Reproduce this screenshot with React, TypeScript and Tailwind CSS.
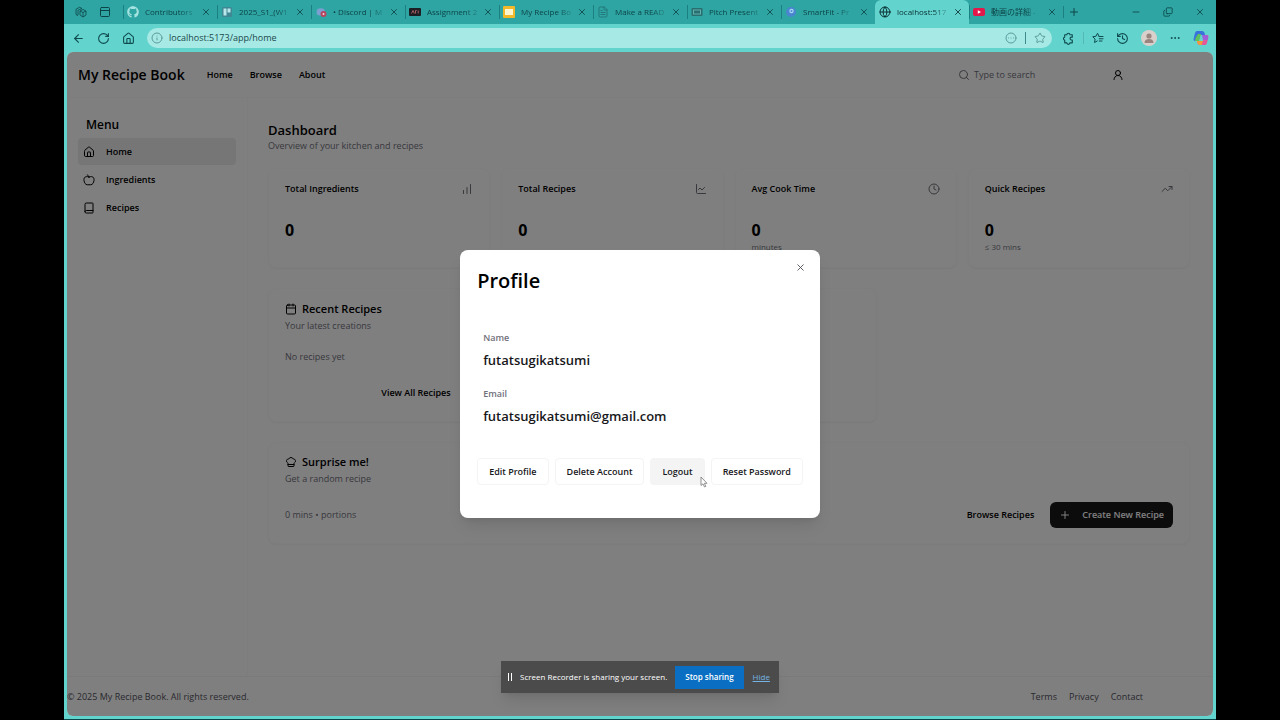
import type { ReactNode } from "react";
import {
  ArrowLeft,
  Book,
  Calendar,
  ChartLine,
  ChartNoAxesColumnIncreasing,
  ChefHat,
  CircleEllipsis,
  Clock,
  Copy,
  Ellipsis,
  FileText,
  Globe,
  History,
  House,
  Info,
  Minus,
  PanelTop,
  Plus,
  RotateCw,
  Search,
  Star,
  TrendingUp,
  UserRound,
  X,
} from "lucide-react";
import { FaGithub } from "react-icons/fa";

const SlidesIcon = () => (
  <svg className="size-3" viewBox="0 0 12 12">
    <rect width="12" height="12" rx="1" fill="#f2b92b" />
    <rect x="2" y="3" width="8" height="6" fill="#fff6cf" />
  </svg>
);

const TrelloIcon = () => (
  <svg className="size-3" viewBox="0 0 12 12">
    <rect x="1" y="1" width="10" height="10" rx="1.5" fill="#3f8793" />
    <rect x="2.5" y="2.5" width="3" height="7" fill="#b9e6ea" />
    <rect x="6.5" y="2.5" width="3" height="4" fill="#b9e6ea" />
  </svg>
);

const DiscordIcon = () => (
  <svg className="size-3" viewBox="0 0 12 12">
    <path d="M2 3.5Q5 1.5 9 3L10.5 8 8 9.5H4L1.5 8Z" fill="#7b9fd0" />
    <circle cx="8.5" cy="8" r="3" fill="#b8455f" />
    <circle cx="8.5" cy="8" r="1" fill="#f3d5dc" />
  </svg>
);

const BadgeIcon = () => (
  <svg className="size-3" viewBox="0 0 12 12">
    <rect y="2" width="12" height="8" rx="1" fill="#1b1f24" />
    <path d="M2.5 7.5 4 4.5 5.3 7.5M6.5 7.5v-3h1.2M9.2 4.5v3" stroke="#c87070" strokeWidth="0.8" fill="none" />
  </svg>
);

const PitchIcon = () => (
  <svg className="size-3" viewBox="0 0 12 12">
    <rect x="0.5" y="2" width="11" height="8" rx="1" fill="#2b6e70" />
    <rect x="2.5" y="4" width="7" height="4" fill="none" stroke="#5fb0ae" />
  </svg>
);

const SmartFitIcon = () => (
  <svg className="size-3" viewBox="0 0 12 12">
    <circle cx="6" cy="6" r="5" fill="#4a86cf" />
    <circle cx="6.5" cy="5" r="2.2" fill="#a8d8f5" />
    <circle cx="6.5" cy="5" r="1" fill="#4a86cf" />
  </svg>
);

const VideoIcon = () => (
  <svg className="size-3" viewBox="0 0 12 12">
    <rect y="2" width="12" height="8" rx="2" fill="#e3174a" />
    <path d="M4.8 4.2v3.6L8 6Z" fill="#fff" />
  </svg>
);

const WorkspacesIcon = () => (
  <svg className="size-3" viewBox="0 0 24 24" fill="none" stroke="currentColor" strokeWidth="1.6" strokeLinejoin="round">
    <path d="M10 10 16 7l6 3v8l-6 4-6-4Z" />
    <path d="m10 10 6 3 6-3M16 13v9" />
    <path d="M6 19.500 2 17V6.500L9 2.500l5 2.500M6 18V8.500L14 5" />
  </svg>
);

const ExtensionsIcon = () => (
  <svg className="size-[13px]" viewBox="0 0 24 24" fill="none" stroke="currentColor" strokeWidth="2" strokeLinejoin="round">
    <path d="M9 5a2.800 2.800 0 0 1 5.600 0H19v4.500h-1.500a2.700 2.700 0 0 0 0 5.400H19V20h-4.400a2.800 2.800 0 0 1-5.600 0H5v-5a2.800 2.800 0 0 1 0-5.500V5Z" />
  </svg>
);

const AppleIcon = () => (
  <svg className="size-3" viewBox="0 0 24 24" fill="none" stroke="currentColor" strokeWidth="2" strokeLinecap="round" strokeLinejoin="round">
    <path d="M12 6c-2-1-4-1-6.500-.5C2.500 6.500 1.500 9.500 2 13c.6 4.500 3 8.500 6.500 8.500h7c3.500 0 5.900-4 6.500-8.500.5-3.500-.5-6.500-3.500-7.500C16 5 14 5 12 6Z" />
    <path d="M12 6.500C12 4 10.500 2.500 8.500 2" />
  </svg>
);

const FavoritesIcon = () => (
  <svg className="size-3" viewBox="0 0 24 24" fill="none" stroke="currentColor" strokeWidth="2" strokeLinecap="round" strokeLinejoin="round">
    <path d="M14 8.500 11 2.500 8 8.500l-6.500 1 4.700 4.600L5.100 21l5.400-3M14 9h8M14.500 13.500H22M14.500 18H20" />
  </svg>
);

const CopilotIcon = () => (
  <svg className="size-4" viewBox="0 0 16 16">
    <path d="M4 1h5q2 0 2.600 2L12 5H6L4 11H2Q0 11 .8 8L2 3Q2.500 1 4 1Z" fill="#3a72dd" />
    <path d="M2 11h4l2-7H5L2.500 8Z" fill="#5fc25c" />
    <path d="M12 15H7q-2 0-2.600-2L4 11h6l2-6h2q2 0 1.200 3L14 13q-.5 2-2 2Z" fill="#e3589b" />
    <path d="M9 5h4q2.500 0 2 3l-.6 2H10Z" fill="#9e5fd8" />
    <path d="M4 11h6l-1.500 4H7q-2 0-2.600-2Z" fill="#f39a3c" />
  </svg>
);

const Cursor = () => (
  <svg className="absolute -right-1 -bottom-1 z-10 h-3 w-2" viewBox="0 0 8 12">
    <path d="M1 1v8.500l2-1.700 1.500 3.200 1.300-.6L4.400 7.300H7Z" fill="#fff" stroke="#777" strokeWidth="0.8" />
  </svg>
);

const tabs: { title: string; icon: ReactNode; active?: boolean }[] = [
  { title: "Contributors", icon: <FaGithub className="size-3 text-[#a5e3e0]" /> },
  { title: "2025_S1_(W1", icon: <TrelloIcon /> },
  { title: "• Discord | M", icon: <DiscordIcon /> },
  { title: "Assignment 2", icon: <BadgeIcon /> },
  { title: "My Recipe Bo", icon: <SlidesIcon /> },
  { title: "Make a READ", icon: <FileText className="size-3 text-[#23787a]" /> },
  { title: "Pitch Present", icon: <PitchIcon /> },
  { title: "SmartFit - Pr", icon: <SmartFitIcon /> },
  { title: "localhost:517", icon: <Globe className="size-3" />, active: true },
  { title: "動画の詳細 -", icon: <VideoIcon /> },
];

const TabStrip = () => (
  <div className="flex h-6 items-center bg-[#2fa5a3] text-[#0c4447]">
    <div className="flex w-[59px] shrink-0 items-center gap-3 pl-[11px]">
      <button aria-label="Workspaces">
        <WorkspacesIcon />
      </button>
      <button aria-label="Tab actions">
        <PanelTop className="size-3" />
      </button>
    </div>
    <div className="flex h-full min-w-0 flex-1">
      {tabs.map((tab) => (
        <div
          key={tab.title}
          className={
            tab.active
              ? "flex min-w-0 flex-1 items-center gap-1 rounded-t-md bg-[#62d3cd] pr-1 pl-1 text-[#0a3033]"
              : "flex min-w-0 flex-1 items-center gap-1 bg-[linear-gradient(#1c7f80,#1c7f80)] bg-[length:1px_14px] bg-[position:left_center] bg-no-repeat pr-1 pl-1"
          }
        >
          <button className="flex min-w-0 flex-1 items-center gap-1.5">
            <span className="shrink-0">{tab.icon}</span>
            <span className="text-[8px] whitespace-nowrap [mask-image:linear-gradient(to_right,black_75%,rgba(0,0,0,0.3))]">
              {tab.title}
            </span>
          </button>
          <button aria-label="Close tab" className="shrink-0 p-0.5">
            <X className="size-[10px]" />
          </button>
        </div>
      ))}
    </div>
    <div className="flex w-[153px] shrink-0 items-center bg-[linear-gradient(#1c7f80,#1c7f80)] bg-[length:1px_14px] bg-[position:left_center] bg-no-repeat pr-[11px] pl-[5px]">
      <button aria-label="New tab">
        <Plus className="size-3" />
      </button>
      <div className="ml-auto flex items-center gap-[22px]">
        <button aria-label="Minimize">
          <Minus className="size-2.5" />
        </button>
        <button aria-label="Restore">
          <Copy className="size-2.5 -scale-y-100" />
        </button>
        <button aria-label="Close window">
          <X className="size-2.5" />
        </button>
      </div>
    </div>
  </div>
);

const Toolbar = () => (
  <div className="flex h-7 items-center bg-[#62d3cd] pr-[7px] pl-2 text-[#0f4a4d]">
    <div className="flex items-center gap-3 pr-3">
      <button aria-label="Back">
        <ArrowLeft className="size-[13px]" />
      </button>
      <button aria-label="Refresh">
        <RotateCw className="size-[13px]" />
      </button>
      <button aria-label="Home page">
        <House className="size-[13px]" />
      </button>
    </div>
    <div className="flex h-5 flex-1 items-center rounded-full bg-[#a6e9e5] px-1">
      <Info className="size-3 text-[#5a9c9b]" />
      <input
        aria-label="Address"
        className="ml-1.5 min-w-0 flex-1 bg-transparent text-[9px] text-[#1d4a4c] outline-none"
        defaultValue="localhost:5173/app/home"
      />
      <button aria-label="Page options">
        <CircleEllipsis className="size-3 text-[#5a9c9b]" />
      </button>
      <span className="mx-2 h-3 w-px bg-[#3f8a8a]" />
      <button aria-label="Add to favorites" className="mr-0.5">
        <Star className="size-3 text-[#5a9c9b]" />
      </button>
    </div>
    <div className="flex items-center gap-3 pl-[10px]">
      <button aria-label="Extensions">
        <ExtensionsIcon />
      </button>
      <span className="-mx-1 h-3 w-px bg-[#52b9b5]" />
      <button aria-label="Favorites">
        <FavoritesIcon />
      </button>
      <button aria-label="History">
        <History className="size-[13px]" />
      </button>
      <button aria-label="Account">
        <span className="flex size-4 items-center justify-center rounded-full bg-[#d9d0cb]">
          <svg className="size-3" viewBox="0 0 12 12" fill="#98857f">
            <circle cx="6" cy="4" r="2.600" />
            <path d="M1.500 11q0-4 4.500-4t4.500 4Z" />
          </svg>
        </span>
      </button>
      <button aria-label="Settings and more">
        <Ellipsis className="size-3" />
      </button>
      <button aria-label="Copilot">
        <CopilotIcon />
      </button>
    </div>
  </div>
);

const Header = () => (
  <header className="flex h-[46px] items-center border-b border-zinc-50 pr-[89px] pl-[11px] font-semibold">
    <a href="#home" className="text-sm">
      My Recipe Book
    </a>
    <nav className="ml-[22px] flex gap-[17px] text-[9px]">
      <a href="#home">Home</a>
      <a href="#browse">Browse</a>
      <a href="#about">About</a>
    </nav>
    <label className="ml-auto flex items-center gap-1 font-normal text-zinc-500">
      <Search className="size-3" />
      <input
        aria-label="Search"
        className="w-[138px] bg-transparent text-[9px] outline-none placeholder:text-zinc-500"
        placeholder="Type to search"
      />
    </label>
    <button aria-label="Profile">
      <UserRound className="size-3" />
    </button>
  </header>
);

const menu = [
  { label: "Home", icon: <House className="size-3" />, active: true },
  { label: "Ingredients", icon: <AppleIcon /> },
  { label: "Recipes", icon: <Book className="size-3" /> },
];

const Sidebar = () => (
  <aside className="w-[181px] shrink-0 border-r border-zinc-50 px-[11px] pt-[18px]">
    <h2 className="px-2 text-xs leading-[18px] font-semibold">Menu</h2>
    <ul className="mt-1 text-[9px] font-semibold">
      {menu.map((item) => (
        <li key={item.label} className="mb-px">
          <a
            href="#menu"
            className={
              item.active
                ? "flex h-[27px] items-center gap-[11px] rounded bg-[#ececef] px-[5px]"
                : "flex h-[27px] items-center gap-[11px] rounded px-[5px]"
            }
          >
            {item.icon}
            {item.label}
          </a>
        </li>
      ))}
    </ul>
  </aside>
);

const stats = [
  { label: "Total Ingredients", note: "", icon: <ChartNoAxesColumnIncreasing className="size-3" /> },
  { label: "Total Recipes", note: "", icon: <ChartLine className="size-3" /> },
  { label: "Avg Cook Time", note: "minutes", icon: <Clock className="size-3" /> },
  { label: "Quick Recipes", note: "≤ 30 mins", icon: <TrendingUp className="size-3" /> },
];

const card = "rounded-lg border border-zinc-50 px-4 shadow-xs";

const Dashboard = () => (
  <main className="min-w-0 flex-1 pt-[23px] pr-[23px] pl-5">
    <h1 className="text-[13px] leading-[18px] font-semibold">Dashboard</h1>
    <p className="text-[9px] leading-[14px] text-zinc-500">Overview of your kitchen and recipes</p>

    <div className="mt-[15px] grid grid-cols-4 gap-[11px]">
      {stats.map((stat) => (
        <section key={stat.label} className={`${card} h-[100px] pt-3`}>
          <div className="flex items-center justify-between">
            <h2 className="text-[9px] leading-4 font-semibold">{stat.label}</h2>
            <span className="text-zinc-500">{stat.icon}</span>
          </div>
          <p className="mt-[21px] text-base leading-6 font-bold">0</p>
          <p className="text-[8px] leading-[9px] text-zinc-500">{stat.note}</p>
        </section>
      ))}
    </div>

    <div className="mt-5 grid grid-cols-3 gap-[17px]">
      <section className={`${card} h-[134px] pt-[11px]`}>
        <h2 className="flex items-center gap-[5px] text-[11px] leading-[18px] font-semibold">
          <Calendar className="size-3" />
          Recent Recipes
        </h2>
        <p className="text-[9px] leading-4 text-zinc-500">Your latest creations</p>
        <p className="mt-[15px] text-[9px] leading-4 text-zinc-500">No recipes yet</p>
        <button className="mt-[15px] h-[26px] w-full text-[9px] font-semibold">View All Recipes</button>
      </section>
      <section className={`${card} h-[134px]`} />
    </div>

    <section className={`${card} mt-5 h-[102px] pt-[10px]`}>
      <h2 className="flex items-center gap-[5px] text-[11px] leading-[18px] font-semibold">
        <ChefHat className="size-3" />
        Surprise me!
      </h2>
      <p className="text-[9px] leading-4 text-zinc-500">Get a random recipe</p>
      <div className="mt-[15px] flex items-center text-[9px] font-semibold">
        <p className="flex-1 font-normal text-zinc-500">0 mins • portions</p>
        <button className="h-[26px] px-4">Browse Recipes</button>
        <button className="flex h-[26px] items-center gap-[11px] rounded-md bg-zinc-900 px-[9px] text-white">
          <Plus className="size-3" />
          Create New Recipe
        </button>
      </div>
    </section>
  </main>
);

const Footer = () => (
  <footer className="flex h-10 items-center justify-between border-t border-zinc-100 pr-[70px] text-[9px] text-zinc-600">
    <p>© 2025 My Recipe Book. All rights reserved.</p>
    <nav className="flex gap-3">
      <a href="#terms">Terms</a>
      <a href="#privacy">Privacy</a>
      <a href="#contact">Contact</a>
    </nav>
  </footer>
);

const dialogButton = "h-[27px] rounded border border-zinc-100 px-[11px]";

const ProfileDialog = () => (
  <div className="absolute inset-0 flex items-center justify-center bg-black/50">
    <div
      role="dialog"
      aria-labelledby="profile-title"
      className="relative rounded-lg bg-white px-[17px] pt-[17px] pb-[33px] text-zinc-900 shadow-lg"
    >
      <h2 id="profile-title" className="text-xl leading-7 font-semibold text-black">
        Profile
      </h2>
      <button aria-label="Close" className="absolute top-3 right-3.5 text-zinc-600">
        <X className="size-[11px]" />
      </button>
      <dl className="mt-9 px-[6px] font-semibold">
        <dt className="text-[9px] leading-[14px] text-zinc-500">Name</dt>
        <dd className="mt-1.5 text-[13px] leading-[18px]">futatsugikatsumi</dd>
        <dt className="mt-[18px] text-[9px] leading-[14px] text-zinc-500">Email</dt>
        <dd className="mt-1.5 text-[13px] leading-[18px]">futatsugikatsumi@gmail.com</dd>
      </dl>
      <div className="mt-[33px] flex gap-1.5 text-[9px] font-semibold">
        <button className={dialogButton}>Edit Profile</button>
        <button className={dialogButton}>Delete Account</button>
        <button className={`${dialogButton} relative bg-zinc-100`}>
          Logout
          <Cursor />
        </button>
        <button className={dialogButton}>Reset Password</button>
      </div>
    </div>
  </div>
);

const ShareBar = () => (
  <div className="absolute inset-x-0 bottom-[23px] flex justify-center">
    <div className="flex h-8 items-center bg-[#4b4b4b] pr-[9px] pl-[7px] text-[8px] text-white shadow-lg">
      <span className="mr-2 flex gap-0.5">
        <span className="h-2 w-px bg-white" />
        <span className="h-2 w-px bg-white" />
      </span>
      Screen Recorder is sharing your screen.
      <button className="ml-2 h-[23px] bg-[#0a6fc2] px-[10px] font-semibold">Stop sharing</button>
      <a href="#hide" className="ml-[9px] text-[#74b4e4] underline">
        Hide
      </a>
    </div>
  </div>
);

export default function App() {
  return (
    <div className="flex min-h-screen flex-col bg-black px-[5%] font-['Open_Sans','Noto_Sans_CJK_JP',sans-serif]">
      <TabStrip />
      <Toolbar />
      <div className="flex flex-1 border-b border-[#0b4547] bg-[#62d3cd] px-[3px] pb-[3px]">
        <div className="relative flex flex-1 flex-col overflow-hidden rounded-md bg-white text-black">
          <Header />
          <div className="flex flex-1">
            <Sidebar />
            <Dashboard />
          </div>
          <Footer />
          <ProfileDialog />
          <ShareBar />
        </div>
      </div>
    </div>
  );
}
